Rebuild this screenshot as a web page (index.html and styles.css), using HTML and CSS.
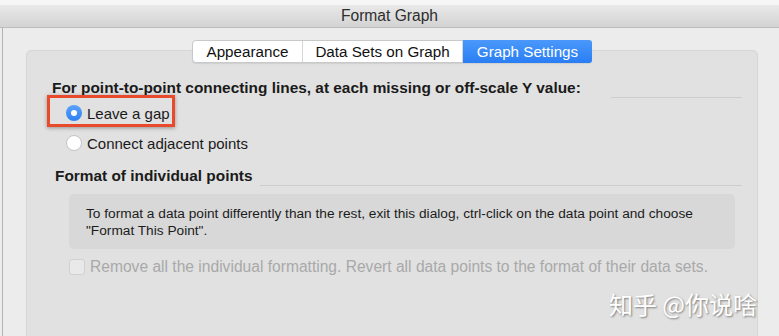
FILE: index.html
```html
<!DOCTYPE html>
<html>
<head>
    <title>Format Graph</title>
    <link rel="stylesheet" href="styles.css">
</head>
<body>

<!-- Toolbar edge behind the dialog -->
<div class="toolbar"></div>

<!-- Title bar -->
<div class="titlebar">Format Graph</div>

<div class="window">
    <div class="sheet">

        <!-- Tabs -->
        <div class="tabs">
            <div class="tab">Appearance</div>
            <div class="tab">Data Sets on Graph</div>
            <div class="tab active">Graph Settings</div>
        </div>

        <div class="panel">
            <div class="section-head">
                <span>For point-to-point connecting lines, at each missing or off-scale Y value:</span>
                <span class="rule short"></span>
            </div>

            <div class="option first">
                <span class="radio checked"></span>
                <span>Leave a gap</span>
            </div>
            <div class="option">
                <span class="radio"></span>
                <span>Connect adjacent points</span>
            </div>

            <div class="section-head second">
                <span>Format of individual points</span>
                <span class="rule"></span>
            </div>

            <div class="info">
                To format a data point differently than the rest, exit this dialog, ctrl-click on the data point and choose<br>
                "Format This Point".
            </div>

            <div class="check-row">
                <span class="checkbox"></span>
                <span>Remove all the individual formatting. Revert all data points to the format of their data sets.</span>
            </div>

            <!-- red highlight drawn over the first option -->
            <div class="highlight"></div>

            <div class="watermark">知乎 @你说啥</div>
        </div>
    </div>
</div>

</body>
</html>
```

FILE: styles.css
```css
body {
    margin: 0;
    height: 336px;
    overflow: hidden;
    background-color: #ececec;
    font-family: "Liberation Sans", Arial, sans-serif;
    color: #1a1a1a;
}

.toolbar {
    height: 5px;
    background-color: #f6f6f6;
}

.titlebar {
    height: 22px;
    line-height: 22px;
    text-align: center;
    font-size: 15.6px;
    color: #2e2e2e;
    background: linear-gradient(#e9e9e9, #d3d3d3);
    border-bottom: 1px solid #bdbdbd;
}

.window {
    height: 308px;
    border-left: 1px solid #b4b4b4;
    margin-left: 2px;
    padding-top: 12px;
}

.sheet {
    width: 732px;
    margin-left: 23px;
}

/* Segmented tab control */
.tabs {
    position: relative;
    z-index: 1;
    display: flex;
    width: 400px;
    height: 23px;
    margin: 0 auto;
    background-color: #ffffff;
    border: 1px solid #c9c9c9;
    border-radius: 4px;
    box-sizing: border-box;
    box-shadow: 0 1px 1px rgba(0, 0, 0, 0.08);
    font-size: 15.2px;
}

.tab {
    display: flex;
    align-items: center;
    justify-content: center;
    color: #111;
    border-right: 1px solid #d6d6d6;
}

.tab:nth-child(1) { width: 109px; }
.tab:nth-child(2) { width: 159px; }

.tab.active {
    flex: 1;
    border-right: none;
    color: #ffffff;
    background: linear-gradient(#4a98fb, #2a7ef4);
    border-radius: 0 3px 3px 0;
    margin: -1px -1px -1px 0;
}

.panel {
    position: relative;
    margin-top: -13px;
    height: 300px;
    padding: 28px 15px 0 25px;
    box-sizing: border-box;
    background-color: #e1e1e1;
    border: 1px solid #d5d5d5;
    border-radius: 5px;
}

.section-head {
    display: flex;
    align-items: flex-end;
    font-size: 15.4px;
    font-weight: bold;
    line-height: 17px;
    height: 17px;
}

.section-head .rule {
    flex: 1;
    height: 1px;
    margin: 0 0 -2px 7px;
    background-color: #cdcdcd;
}

.section-head .rule.short {
    margin-left: 30px;
}

.section-head.second {
    margin-top: 9px;
    margin-left: 3px;
}

.option {
    display: flex;
    align-items: center;
    height: 30px;
    margin-left: 14px;
    font-size: 15px;
}

.option.first {
    margin-top: 2px;
}

.radio {
    width: 16px;
    height: 16px;
    border-radius: 50%;
    box-sizing: border-box;
    background-color: #ffffff;
    border: 1px solid #c4c4c4;
    margin-right: 5px;
    display: flex;
    align-items: center;
    justify-content: center;
}

.radio.checked {
    border: none;
    background: linear-gradient(#5aa3fb, #2f80f2);
}

.radio.checked::after {
    content: "";
    width: 6px;
    height: 6px;
    border-radius: 50%;
    background-color: #ffffff;
}

.info {
    margin: 10px 7px 0 17px;
    padding: 11px 17px 10px 17px;
    background-color: #d8d8d8;
    border-radius: 5px;
    font-size: 13.7px;
    line-height: 17px;
    color: #1c1c1c;
}

.check-row {
    display: flex;
    align-items: center;
    margin: 9px 0 0 17px;
    font-size: 15.6px;
    color: #a9a9a9;
}

.checkbox {
    width: 16px;
    height: 16px;
    box-sizing: border-box;
    border: 1px solid #d0d0d0;
    border-radius: 3px;
    background-color: #e9e9e9;
    margin-right: 5px;
}

.highlight {
    position: absolute;
    left: 20px;
    top: 44px;
    width: 128px;
    height: 32px;
    box-sizing: border-box;
    border: 3px solid #ea4a2c;
    box-shadow: 0 1px 4px rgba(0, 0, 0, 0.35);
}

.watermark {
    position: absolute;
    right: 0;
    top: 235px;
    font-family: "Noto Sans CJK SC", sans-serif;
    font-size: 24px;
    color: #ffffff;
    text-shadow: 1px 1px 2px rgba(0, 0, 0, 0.45);
}
```
